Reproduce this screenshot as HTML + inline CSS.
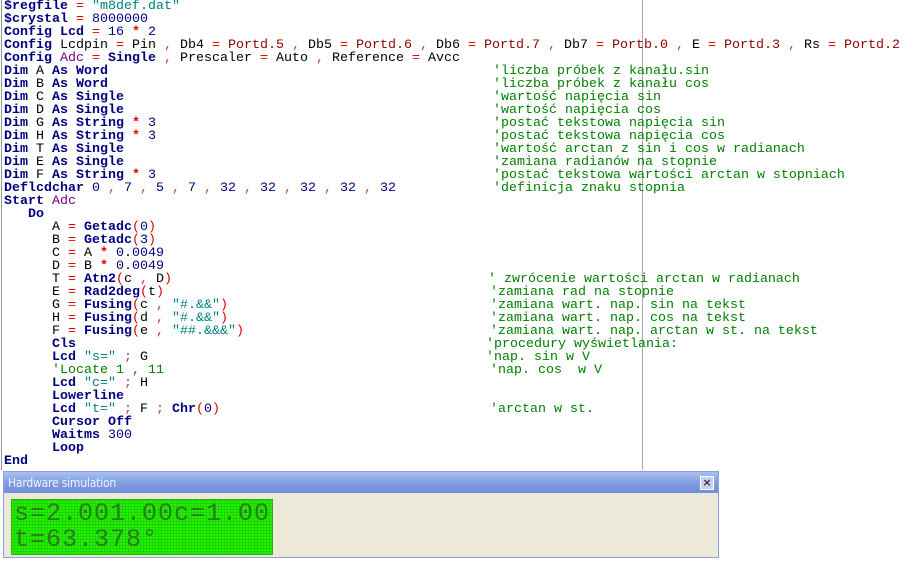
<!DOCTYPE html>
<html><head><meta charset="utf-8"><style>
html,body{margin:0;padding:0;width:917px;height:565px;background:#fff;overflow:hidden;position:relative}
#ed{position:absolute;left:1px;top:0;width:1px;height:470px;background:#999}
#vl{position:absolute;left:642px;top:0;width:1px;height:470px;background:#aaa}
pre{position:absolute;left:4px;top:0;margin:0;font:13.33px/13px "Liberation Mono",monospace;color:#000}
.cm{position:absolute;margin:0;font:13.33px/13px "Liberation Mono",monospace;color:#008000;white-space:pre}
.k{color:#000080;font-weight:bold}
.o{color:#e00000}
.m{color:#c04040}
.s{color:#008080}
.p{color:#900000}
.c{color:#008000}
.a{color:#800080}
.n{color:#000080}
#win{position:absolute;left:3px;top:471px;width:716px;height:87px;background:#ece9d8;border:1px solid #8ba0d8;box-sizing:border-box}
#tb{position:absolute;left:0;top:0;right:0;height:21px;background:linear-gradient(#a8c0f0,#7d98e0 60%,#7390dc);}
#tt{position:absolute;left:4px;top:4px;font:12px "DejaVu Sans Condensed","DejaVu Sans",sans-serif;color:#eef2ff;letter-spacing:-0.2px}
#x{position:absolute;right:4px;top:4px;width:12px;height:12px;background:#c8d0f0;border:1px solid #fff;font:bold 11px/12px "DejaVu Sans",sans-serif;color:#334;text-align:center}
#lcd{position:absolute;left:7px;top:27px;width:262px;height:56px;background:#22f000;border:1px solid #28b010;box-sizing:border-box;background-image:repeating-linear-gradient(90deg,rgba(0,0,0,0) 0 2px,rgba(0,100,0,.15) 2px 3px),repeating-linear-gradient(0deg,rgba(0,0,0,0) 0 2px,rgba(0,100,0,.15) 2px 3px)}
#lcd div{position:absolute;left:2px;font:25px/26px "Liberation Mono",monospace;color:#2a7a20;letter-spacing:1px;white-space:pre}
</style></head><body>
<div id="ed"></div><div id="vl"></div>
<pre><span class="k">$regfile</span> <span class="o">=</span> <span class="s">"m8def.dat"</span>
<span class="k">$crystal</span> <span class="o">=</span> <span class="n">8000000</span>
<span class="k">Config Lcd</span> <span class="o">=</span> <span class="n">16</span> <span class="o"><b>*</b></span> <span class="n">2</span>
<span class="k">Config</span> Lcdpin <span class="o">=</span> Pin <span class="m">,</span> Db4 <span class="o">=</span> <span class="p">Portd.5</span> <span class="m">,</span> Db5 <span class="o">=</span> <span class="p">Portd.6</span> <span class="m">,</span> Db6 <span class="o">=</span> <span class="p">Portd.7</span> <span class="m">,</span> Db7 <span class="o">=</span> <span class="p">Portb.0</span> <span class="m">,</span> E <span class="o">=</span> <span class="p">Portd.3</span> <span class="m">,</span> Rs <span class="o">=</span> <span class="p">Portd.2</span>
<span class="k">Config</span> <span class="a">Adc</span> <span class="o">=</span> <span class="k">Single</span> <span class="m">,</span> Prescaler <span class="o">=</span> Auto <span class="m">,</span> Reference <span class="o">=</span> Avcc
<span class="k">Dim</span> A <span class="k">As Word</span>
<span class="k">Dim</span> B <span class="k">As Word</span>
<span class="k">Dim</span> C <span class="k">As Single</span>
<span class="k">Dim</span> D <span class="k">As Single</span>
<span class="k">Dim</span> G <span class="k">As String</span> <span class="o"><b>*</b></span> <span class="n">3</span>
<span class="k">Dim</span> H <span class="k">As String</span> <span class="o"><b>*</b></span> <span class="n">3</span>
<span class="k">Dim</span> T <span class="k">As Single</span>
<span class="k">Dim</span> E <span class="k">As Single</span>
<span class="k">Dim</span> F <span class="k">As String</span> <span class="o"><b>*</b></span> <span class="n">3</span>
<span class="k">Deflcdchar</span> <span class="n">0</span> <span class="m">,</span> <span class="n">7</span> <span class="m">,</span> <span class="n">5</span> <span class="m">,</span> <span class="n">7</span> <span class="m">,</span> <span class="n">32</span> <span class="m">,</span> <span class="n">32</span> <span class="m">,</span> <span class="n">32</span> <span class="m">,</span> <span class="n">32</span> <span class="m">,</span> <span class="n">32</span>
<span class="k">Start</span> <span class="a">Adc</span>
   <span class="k">Do</span>
      A <span class="o">=</span> <span class="k">Getadc</span><span class="o">(</span><span class="n">0</span><span class="o">)</span>
      B <span class="o">=</span> <span class="k">Getadc</span><span class="o">(</span><span class="n">3</span><span class="o">)</span>
      C <span class="o">=</span> A <span class="o"><b>*</b></span> <span class="n">0.0049</span>
      D <span class="o">=</span> B <span class="o"><b>*</b></span> <span class="n">0.0049</span>
      T <span class="o">=</span> <span class="k">Atn2</span><span class="o">(</span>c <span class="m">,</span> D<span class="o">)</span>
      E <span class="o">=</span> <span class="k">Rad2deg</span><span class="o">(</span>t<span class="o">)</span>
      G <span class="o">=</span> <span class="k">Fusing</span><span class="o">(</span>c <span class="m">,</span> <span class="s">"#.&amp;&amp;"</span><span class="o">)</span>
      H <span class="o">=</span> <span class="k">Fusing</span><span class="o">(</span>d <span class="m">,</span> <span class="s">"#.&amp;&amp;"</span><span class="o">)</span>
      F <span class="o">=</span> <span class="k">Fusing</span><span class="o">(</span>e <span class="m">,</span> <span class="s">"##.&amp;&amp;&amp;"</span><span class="o">)</span>
      <span class="k">Cls</span>
      <span class="k">Lcd</span> <span class="s">"s="</span> <span class="m">;</span> G
      <span class="c">'Locate 1 , 11</span>
      <span class="k">Lcd</span> <span class="s">"c="</span> <span class="m">;</span> H
      <span class="k">Lowerline</span>
      <span class="k">Lcd</span> <span class="s">"t="</span> <span class="m">;</span> F <span class="m">;</span> <span class="k">Chr</span><span class="o">(</span><span class="n">0</span><span class="o">)</span>
      <span class="k">Cursor Off</span>
      <span class="k">Waitms</span> <span class="n">300</span>
      <span class="k">Loop</span>
<span class="k">End</span></pre>
<div class="cm" style="left:493px;top:65px">'liczba próbek z kanału.sin
'liczba próbek z kanału cos
'wartość napięcia sin
'wartość napięcia cos
'postać tekstowa napięcia sin
'postać tekstowa napięcia cos
'wartość arctan z sin i cos w radianach
'zamiana radianów na stopnie
'postać tekstowa wartości arctan w stopniach
'definicja znaku stopnia</div>
<div class="cm" style="left:488px;top:273px">' zwrócenie wartości arctan w radianach</div>
<div class="cm" style="left:490px;top:286px">'zamiana rad na stopnie
'zamiana wart. nap. sin na tekst
'zamiana wart. nap. cos na tekst
'zamiana wart. nap. arctan w st. na tekst</div>
<div class="cm" style="left:486px;top:338px">'procedury wyświetlania:
'nap. sin w V</div>
<div class="cm" style="left:490px;top:364px">'nap. cos  w V</div>
<div class="cm" style="left:490px;top:403px">'arctan w st.</div>
<div id="win">
 <div id="tb"><div id="tt">Hardware simulation</div><div id="x">×</div></div>
 <div id="lcd"><div style="top:1px">s=2.001.00c=1.00</div><div style="top:27px">t=63.378°</div></div>
</div>
</body></html>
